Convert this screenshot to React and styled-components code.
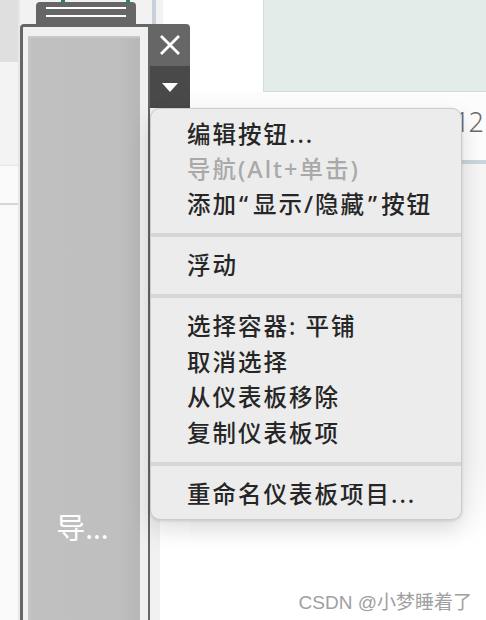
import React from 'react';
import styled, { createGlobalStyle } from 'styled-components';

const Global = createGlobalStyle`
  html, body { margin: 0; padding: 0; background: #fff; }
  * { box-sizing: border-box; }
`;

const Page = styled.div`
  position: relative;
  width: 486px;
  height: 620px;
  overflow: hidden;
  display: flex;
  background: #ffffff;
  font-family: "Noto Sans", "Noto Sans CJK SC", sans-serif;
`;

const LeftStrip = styled.div`
  width: 20px;
  display: flex;
  flex-direction: column;
  border-right: 2px solid #e8e8e8;
`;

const StripBlock = styled.div`
  height: ${p => p.$h ? p.$h + 'px' : 'auto'};
  flex: ${p => p.$h ? 'none' : '1'};
  background: ${p => p.$bg};
`;

const ContainerCol = styled.div`
  width: 170px;
  display: flex;
  flex-direction: column;
`;

const TopRow = styled.div`
  height: 24px;
  display: flex;
  align-items: flex-end;
  padding-left: 16px;
  background: linear-gradient(to right, #f2f2f2 0 132px, #c9d2da 132px 136px, #f2f2f2 136px 143px, #ffffff 143px);
`;

const Tab = styled.div`
  position: relative;
  width: 100px;
  height: 22px;
  background: #666666;
  border-radius: 4px 4px 0 0;
  display: flex;
  flex-direction: column;
  align-items: center;
  gap: 6px;
  padding-top: 5px;
  &::before, &::after {
    content: '';
    position: absolute;
    top: -2px;
    width: 4px;
    height: 2px;
    background: #138a6c;
  }
  &::before { left: 25px; }
  &::after { left: 90px; }
`;

const TabLine = styled.div`
  width: 80px;
  height: 2px;
  background: #ffffff;
`;

const Body = styled.div`
  flex: 1;
  display: flex;
`;

const Frame = styled.div`
  width: 130px;
  display: flex;
  border: 3px solid #666666;
  border-right-width: 2px;
  border-bottom: none;
  border-top-left-radius: 4px;
  background: #f0f0f0;
  padding: 9px 8px 0 5px;
`;

const Panel = styled.div`
  flex: 1;
  display: flex;
  align-items: flex-end;
  justify-content: center;
  padding-bottom: 74px;
  background: linear-gradient(to right, #c6c6c6 0, #c0c0c0 4px, #bfbfbf 80%, #b7b7b7 100%);
  border-top: 2px solid #c8c8c8;
`;

const PanelLabel = styled.span`
  color: #ffffff;
  font-size: 29px;
  line-height: 36px;
  padding-right: 3px;
`;

const Side = styled.div`
  width: 40px;
  display: flex;
  flex-direction: column;
`;

const SideButton = styled.div`
  height: 42px;
  display: flex;
  align-items: center;
  justify-content: center;
  background: ${p => p.$dark ? '#494949' : '#666666'};
  border-top-right-radius: ${p => p.$dark ? '0' : '4px'};
`;

const SideFill = styled.div`
  flex: 1;
  background: linear-gradient(to right, #f0f0f0 10px, #ffffff 10px);
`;

const RightArea = styled.div`
  flex: 1;
  display: flex;
  flex-direction: column;
`;

const TopBand = styled.div`
  height: 92px;
  display: flex;
  justify-content: flex-end;
`;

const TealBox = styled.div`
  width: 223px;
  background: #e3ece9;
  border-left: 1px solid #cfe0da;
  border-bottom: 1px solid #cfe0da;
`;

const NumberRow = styled.div`
  height: 68px;
  display: flex;
  justify-content: flex-end;
  align-items: flex-start;
  padding: 12px 3px 0 0;
  background: #fcfcfc;
`;

const BigNumber = styled.span`
  font-family: "Noto Sans", sans-serif;
  font-weight: 300;
  font-size: 27px;
  line-height: 36px;
  letter-spacing: -1px;
  color: #6a6a6a;
`;

const Bar = styled.div`
  height: 4px;
  background: #c9d4dc;
`;

const RightRest = styled.div`
  flex: 1;
  background: linear-gradient(#f5f5f5 0, #f5f5f5 300px, #ffffff 380px);
`;

const Menu = styled.div`
  position: absolute;
  left: 150px;
  top: 108px;
  width: 312px;
  padding: 8px 0 7px;
  background: #ececec;
  border: 1px solid #cbcbcb;
  border-radius: 10px;
  box-shadow: 0 10px 22px rgba(0, 0, 0, 0.13), 0 1px 3px rgba(0, 0, 0, 0.12);
`;

const Group = styled.div`
  display: flex;
  flex-direction: column;
`;

const Separator = styled.div`
  height: 4px;
  margin: 11px 0;
  background: #d6d6d6;
`;

const Item = styled.div`
  height: ${p => p.$tall ? '35.5px' : '35px'};
  line-height: ${p => p.$tall ? '35.5px' : '35px'};
  padding-left: 36px;
  font-size: 23.5px;
  font-weight: 500;
  letter-spacing: 2px;
  white-space: nowrap;
  color: ${p => p.$disabled ? '#a9a9a9' : '#262626'};
`;

const Quote = styled.span`
  letter-spacing: 0;
  margin: 0 ${p => p.$close ? '4px' : '5px'} 0 ${p => p.$close ? '2px' : '1px'};
`;

const Watermark = styled.div`
  position: absolute;
  right: 14px;
  bottom: 6px;
  font-family: "Liberation Sans", "Noto Sans CJK SC", sans-serif;
  font-size: 19px;
  color: #a0a0a0;
`;

const CloseIcon = () => (
  <svg width="22" height="22" viewBox="0 0 22 22">
    <path d="M2 2 L20 20 M20 2 L2 20" stroke="#ffffff" strokeWidth="2.8" fill="none" />
  </svg>
);

const CaretIcon = () => (
  <svg width="16" height="9" viewBox="0 0 16 9">
    <polygon points="0,0 16,0 8,9" fill="#ffffff" />
  </svg>
);

const App = () => {
  return (
    <Page>
      <Global />
      <LeftStrip>
        <StripBlock $h={62} $bg="#dfdfdf" />
        <StripBlock $h={103} $bg="#f3f3f3" />
        <StripBlock $h={1} $bg="#e6e6e6" />
        <StripBlock $h={37} $bg="#fafafa" />
        <StripBlock $h={2} $bg="#d6d6d6" />
        <StripBlock $bg="#f9f9f9" />
      </LeftStrip>

      <ContainerCol>
        <TopRow>
          <Tab>
            <TabLine />
            <TabLine />
          </Tab>
        </TopRow>
        <Body>
          <Frame>
            <Panel>
              <PanelLabel>导...</PanelLabel>
            </Panel>
          </Frame>
          <Side>
            <SideButton><CloseIcon /></SideButton>
            <SideButton $dark><CaretIcon /></SideButton>
            <SideFill />
          </Side>
        </Body>
      </ContainerCol>

      <RightArea>
        <TopBand>
          <TealBox />
        </TopBand>
        <NumberRow>
          <BigNumber>12</BigNumber>
        </NumberRow>
        <Bar />
        <RightRest />
      </RightArea>

      <Menu>
        <Group>
          <Item>编辑按钮...</Item>
          <Item $disabled>导航(Alt+单击)</Item>
          <Item>添加<Quote>“</Quote>显示/隐藏<Quote $close>”</Quote>按钮</Item>
        </Group>
        <Separator />
        <Group>
          <Item>浮动</Item>
        </Group>
        <Separator />
        <Group>
          <Item $tall>选择容器: 平铺</Item>
          <Item $tall>取消选择</Item>
          <Item $tall>从仪表板移除</Item>
          <Item $tall>复制仪表板项</Item>
        </Group>
        <Separator />
        <Group>
          <Item>重命名仪表板项目...</Item>
        </Group>
      </Menu>

      <Watermark>CSDN @小梦睡着了</Watermark>
    </Page>
  );
};

export default App;
